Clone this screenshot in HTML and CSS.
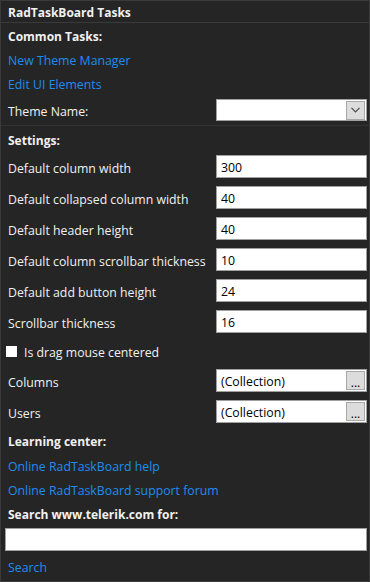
FILE: index.html
```html
<!DOCTYPE html>
<html lang="en">
<head>
    <meta charset="UTF-8">
    <title>RadTaskBoard Tasks</title>
    <link rel="stylesheet" href="styles.css">
</head>
<body>

<div class="panel">
    <div class="panel-title">RadTaskBoard Tasks</div>

    <div class="row heading"><span class="txt">Common Tasks:</span></div>
    <div class="row"><span class="txt link">New Theme Manager</span></div>
    <div class="row"><span class="txt link">Edit UI Elements</span></div>
    <div class="row field theme-row">
        <span class="txt">Theme Name:</span>
        <div class="box combo">
            <span class="box-text"></span>
            <span class="box-btn">
                <svg width="9" height="6" viewBox="0 0 9 6"><path d="M0.5 0.8 L4.5 4.8 L8.5 0.8" fill="none" stroke="#4a4a4a" stroke-width="1.2"/></svg>
            </span>
        </div>
    </div>

    <div class="separator"></div>

    <div class="row heading settings"><span class="txt">Settings:</span></div>
    <div class="row field"><span class="txt">Default column width</span><div class="box"><span class="box-text">300</span></div></div>
    <div class="row field"><span class="txt">Default collapsed column width</span><div class="box"><span class="box-text">40</span></div></div>
    <div class="row field"><span class="txt">Default header height</span><div class="box"><span class="box-text">40</span></div></div>
    <div class="row field"><span class="txt">Default column scrollbar thickness</span><div class="box"><span class="box-text">10</span></div></div>
    <div class="row field"><span class="txt">Default add button height</span><div class="box"><span class="box-text">24</span></div></div>
    <div class="row field"><span class="txt">Scrollbar thickness</span><div class="box"><span class="box-text">16</span></div></div>
    <div class="row check-row"><span class="checkbox"></span><span class="txt">Is drag mouse centered</span></div>
    <div class="row field"><span class="txt">Columns</span><div class="box"><span class="box-text">(Collection)</span><span class="box-btn dots">...</span></div></div>
    <div class="row field"><span class="txt">Users</span><div class="box"><span class="box-text">(Collection)</span><span class="box-btn dots">...</span></div></div>

    <div class="row heading learning"><span class="txt">Learning center:</span></div>
    <div class="row"><span class="txt link">Online RadTaskBoard help</span></div>
    <div class="row"><span class="txt link">Online RadTaskBoard support forum</span></div>
    <div class="row heading"><span class="txt">Search www.telerik.com for:</span></div>
    <div class="search-box"></div>
    <div class="row search-link"><span class="txt link">Search</span></div>
</div>

</body>
</html>
```

FILE: styles.css
```css
* {
    margin: 0;
    padding: 0;
    box-sizing: border-box;
}
body {
    background-color: #252525;
    font-family: "Open Sans", "Noto Sans", sans-serif;
    font-size: 12.3px;
    color: #f1f1f1;
}
.panel {
    width: 370px;
    height: 582px;
    border: 1px solid #3a3a3a;
    background-color: #252525;
    display: flex;
    flex-direction: column;
}
.panel-title {
    height: 22px;
    line-height: 23px;
    padding-left: 7px;
    font-size: 12px;
    font-weight: 700;
    border-bottom: 1px solid #3a3a3a;
    flex-shrink: 0;
}
.row {
    display: flex;
    align-items: center;
    height: 24px;
    padding-left: 7px;
    padding-right: 2px;
    flex-shrink: 0;
    white-space: nowrap;
}
.txt {
    padding-top: 3px;
}
.heading {
    font-size: 12px;
    font-weight: 700;
}
.link {
    color: #1d8df0;
}
.field {
    height: 31px;
    justify-content: space-between;
}
.theme-row {
    height: 30px;
}
.separator {
    height: 1px;
    background-color: #333333;
    flex-shrink: 0;
}
.settings {
    height: 25px;
}
.box {
    width: 151px;
    height: 23px;
    background-color: #ffffff;
    border: 1px solid #a0a0a0;
    display: flex;
    align-items: center;
    justify-content: space-between;
    color: #000000;
    padding-left: 4px;
    padding-right: 1px;
}
.box-text {
    padding-top: 1px;
}
.combo {
    height: 22px;
}
.box-btn {
    width: 19px;
    height: 19px;
    background-color: #dcdcdc;
    border: 1px solid #a8a8a8;
    display: flex;
    align-items: center;
    justify-content: center;
}
.dots {
    font-size: 12px;
    line-height: 12px;
    padding-top: 4px;
}
.check-row {
    height: 28px;
    padding-left: 5px;
}
.checkbox {
    width: 11px;
    height: 11px;
    background-color: #ffffff;
    margin-right: 7px;
}
.learning {
    height: 26px;
    align-items: flex-end;
    padding-bottom: 3px;
}
.search-box {
    height: 23px;
    margin: 3px 2px 3px 4px;
    background-color: #ffffff;
    border: 1px solid #a0a0a0;
    flex-shrink: 0;
}
.search-link {
    height: 24px;
}
```
